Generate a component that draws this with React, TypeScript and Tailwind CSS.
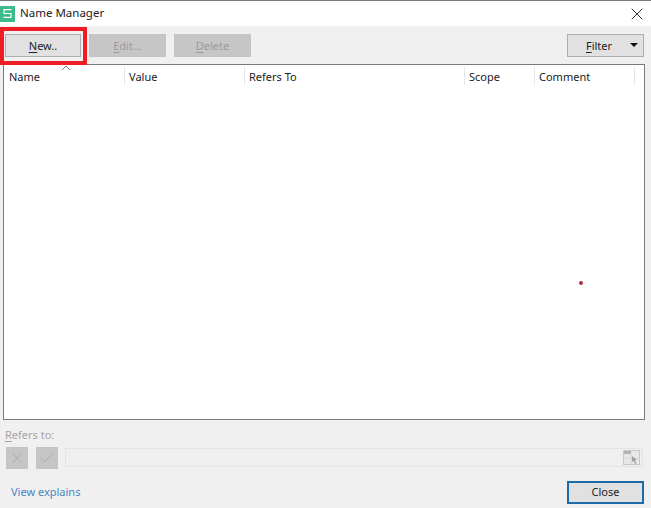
import React from "react";
import { X, Check } from "lucide-react";

const columns = [
  { label: "Name", width: "w-[121px]", pad: "pl-[5px]" },
  { label: "Value", width: "w-[120px]", pad: "pl-[4px]" },
  { label: "Refers To", width: "w-[220px]", pad: "pl-[4px]" },
  { label: "Scope", width: "w-[70px]", pad: "pl-[4px]" },
  { label: "Comment", width: "w-[100px]", pad: "pl-[4px]" },
];

const ToolButton = ({ first, rest, disabled, width }: { first: string; rest: string; disabled?: boolean; width: string }) => (
  <button
    className={`h-[23px] ${width} border pt-[1px] text-[11px] ${
      disabled ? "border-[#c4c4c4] bg-[#c6c6c6] text-[#9a9a9a]" : "border-[#adadad] bg-[#e1e1e1] text-[#222]"
    }`}
  >
    <span className="underline underline-offset-2">{first}</span>
    {rest}
  </button>
);

export default function App() {
  return (
    <div className="relative flex h-[508px] w-[651px] flex-col overflow-hidden border-t border-[#7a7a7a] bg-[#f0f0f0] font-['Noto_Sans','Open_Sans',sans-serif] text-[#222]">
      {/* title bar */}
      <div className="flex h-[25px] shrink-0 items-center bg-white">
        <div className="flex h-[16px] w-[15px] items-center justify-center bg-[#3dbb8c]">
          <svg width="9" height="9" viewBox="0 0 9 9" fill="none" stroke="white" strokeWidth="1.1">
            <path d="M8.5 .6H1V4.5H8V8.4H.5" />
          </svg>
        </div>
        <span className="mb-[2px] ml-[5px] text-[11.5px]">Name Manager</span>
        <X className="ml-auto mr-[4px] h-[20px] w-[20px] text-[#333]" strokeWidth={1.2} />
      </div>

      {/* toolbar */}
      <div className="flex h-[38px] shrink-0 items-start pl-[5px] pr-[7px] pt-[8px]">
        <div className="flex gap-[8px]">
          <ToolButton first="N" rest="ew.." width="w-[76px]" />
          <ToolButton first="E" rest="dit..." width="w-[77px]" disabled />
          <ToolButton first="D" rest="elete" width="w-[77px]" disabled />
        </div>
        <button className="relative ml-auto h-[23px] w-[77px] border border-[#adadad] bg-[#e1e1e1] pr-[13px] pt-[1px] text-[11px]">
          <span className="underline underline-offset-2">F</span>ilter
          <span className="absolute right-[5px] top-[8px] h-0 w-0 border-x-[4px] border-t-[4px] border-x-transparent border-t-[#111]" />
        </button>
      </div>

      {/* list */}
      <div className="ml-[3px] mr-[6px] flex h-[356px] shrink-0 flex-col border border-[#7a7a7a] bg-white">
        <div className="relative flex h-[20px] pt-[2px]">
          {columns.map((c) => (
            <div key={c.label} className={`${c.width} ${c.pad} flex h-[18px] items-center border-r border-[#e5e5e5] pt-[2px] text-[11px]`}>
              {c.label}
            </div>
          ))}
          <svg className="absolute left-[57px] top-0" width="10" height="6" viewBox="0 0 10 6" fill="none" stroke="#777">
            <path d="M1 5L5 1L9 5" />
          </svg>
        </div>
      </div>

      {/* refers to */}
      <div className="mt-[7px] pl-[5px] text-[11px] leading-[16px] text-[#a5a5a5]">
        <span className="underline underline-offset-2">R</span>efers to:
      </div>
      <div className="mt-[4px] flex h-[22px] items-start pl-[6px] pr-[8px]">
        <div className="flex h-[22px] w-[22px] items-center justify-center border border-[#c4c4c4] bg-[#c6c6c6]">
          <X className="h-[18px] w-[18px] text-[#b0b0b0]" strokeWidth={1.4} />
        </div>
        <div className="ml-[8px] flex h-[22px] w-[22px] items-center justify-center border border-[#c4c4c4] bg-[#c6c6c6]">
          <Check className="h-[18px] w-[18px] text-[#b0b0b0]" strokeWidth={1.4} />
        </div>
        <div className="ml-[7px] mt-[1px] flex h-[19px] flex-1 items-center justify-end border border-[#e3e3e3] bg-[#efefef] pr-[2px]">
          <svg width="17" height="15" viewBox="0 0 17 15">
            <rect x="0.5" y="0.5" width="16" height="14" fill="#e8e8e8" stroke="#c8c8c8" />
            <rect x="1" y="1" width="7" height="3" fill="#b4b4b4" />
            <path d="M1 8H16M8 4V14" stroke="#d6d6d6" />
            <path d="M9 6L14 10L12 10.5L13.5 13.5L12 14L11 11L9 12Z" fill="#a0a0a0" />
          </svg>
        </div>
      </div>

      {/* footer */}
      <div className="mt-[11px] flex h-[24px] items-center pl-[11px] pr-[7px]">
        <span className="text-[11px] text-[#4a86c5]">View explains</span>
        <button className="ml-auto h-[23px] w-[77px] border-2 border-[#1f6ba5] bg-[#e1e1e1] pt-[1px] text-[11px]">Close</button>
      </div>

      {/* annotation drawn over the screenshot */}
      <div className="absolute left-0 top-[26px] h-[38px] w-[87px] border-[4px] border-[#ee1c25]" />
      <div className="absolute left-[579px] top-[280px] h-[4px] w-[4px] rounded-full bg-[#b0303a]" />
    </div>
  );
}
